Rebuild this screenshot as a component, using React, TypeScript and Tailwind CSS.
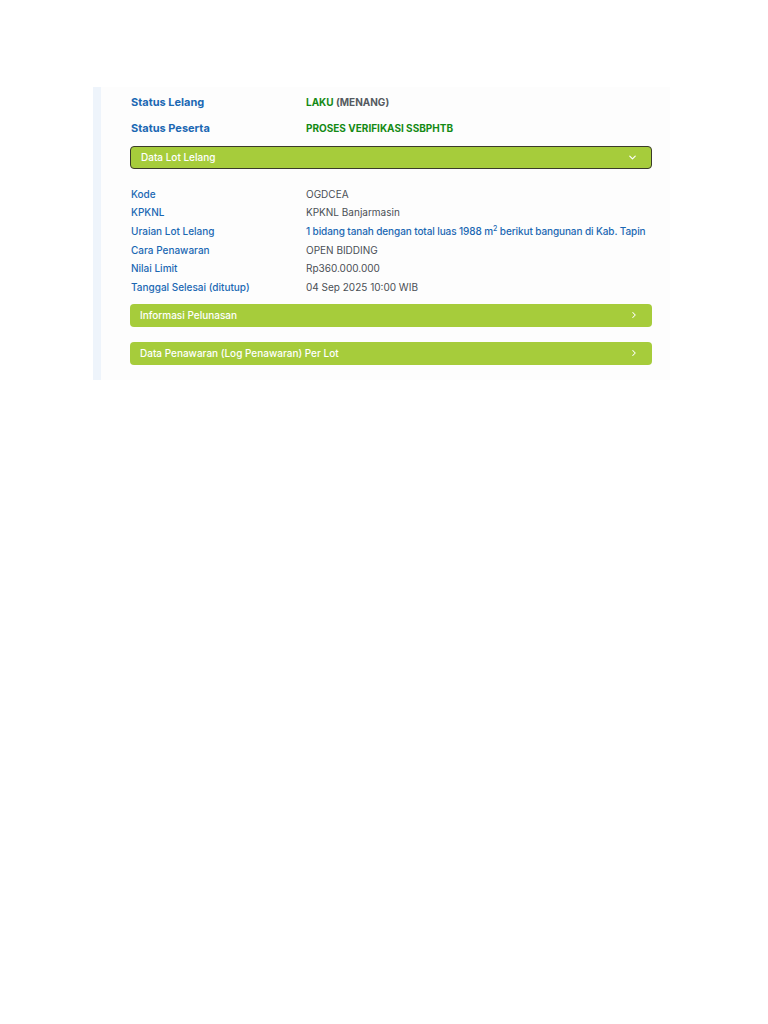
import { ChevronDown, ChevronRight } from "lucide-react";

const labelClass = "w-[175px] shrink-0 text-[10px] font-medium text-[#1b68b3]";

const details: { label: string; value: React.ReactNode; blue?: boolean }[] = [
  { label: "Kode", value: "OGDCEA" },
  { label: "KPKNL", value: "KPKNL Banjarmasin" },
  {
    label: "Uraian Lot Lelang",
    value: (
      <>
        1 bidang tanah dengan total luas 1988 m<sup className="text-[7px] leading-none">2</sup> berikut bangunan di Kab. Tapin
      </>
    ),
    blue: true,
  },
  { label: "Cara Penawaran", value: "OPEN BIDDING" },
  { label: "Nilai Limit", value: "Rp360.000.000" },
  { label: "Tanggal Selesai (ditutup)", value: "04 Sep 2025 10:00 WIB" },
];

function Bar({ title, open }: { title: string; open?: boolean }) {
  return (
    <div
      className={
        "flex h-[23px] items-center justify-between rounded-[4px] bg-[#a6cc3b] pl-[10px] pr-[13px] text-[10px] font-medium text-white " +
        (open ? "border border-[#3a3a2a]" : "")
      }
    >
      <span>{title}</span>
      {open ? (
        <ChevronDown size={11} strokeWidth={2.5} />
      ) : (
        <ChevronRight size={10} strokeWidth={2.5} />
      )}
    </div>
  );
}

export default function App() {
  return (
    <div
      className="min-h-screen bg-white pt-[87px] pl-[93px]"
      style={{ fontFamily: "Inter, 'Noto Sans', sans-serif" }}
    >
      <div className="flex w-[577px]">
        <div className="w-[8px] shrink-0 bg-[#eef4fb]" />
        <div className="flex-1 bg-[#fdfdfd] pb-[15px] pl-[29px] pr-[18px] pt-[8px]">
          <div className="flex h-[15px] items-center pl-[1px]">
            <span className="w-[175px] shrink-0 text-[11px] font-bold text-[#1b68b3]">Status Lelang</span>
            <span className="text-[10px] font-bold text-[#148a14]">
              LAKU <span className="text-[#555a60]">(MENANG)</span>
            </span>
          </div>
          <div className="mt-[11px] flex h-[15px] items-center pl-[1px]">
            <span className="w-[175px] shrink-0 text-[11px] font-bold text-[#1b68b3]">Status Peserta</span>
            <span className="text-[10px] font-bold text-[#148a14]">PROSES VERIFIKASI SSBPHTB</span>
          </div>
          <div className="mt-[10px]">
            <Bar title="Data Lot Lelang" open />
          </div>
          <div className="mt-[16px] flex flex-col pl-[1px]">
            {details.map((d) => (
              <div key={d.label} className="flex h-[18.6px] items-center whitespace-nowrap">
                <span className={labelClass}>{d.label}</span>
                <span
                  className={
                    "text-[10px] " +
                    (d.blue ? "tracking-[-0.1px] font-medium text-[#1b68b3]" : "text-[#4a4f55]")
                  }
                >
                  {d.value}
                </span>
              </div>
            ))}
          </div>
          <div className="mt-[7px] flex flex-col gap-[15px]">
            <Bar title="Informasi Pelunasan" />
            <Bar title="Data Penawaran (Log Penawaran) Per Lot" />
          </div>
        </div>
      </div>
    </div>
  );
}
